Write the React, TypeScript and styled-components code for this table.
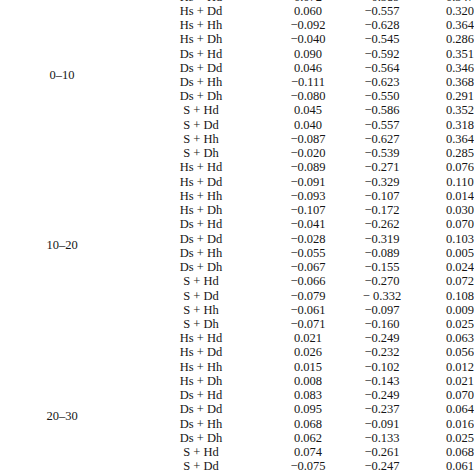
import React from 'react'
import styled, { createGlobalStyle } from 'styled-components'

/*---> Data <---*/
type Row = [string, string, string, string]

const groups: { label: string; rows: Row[] }[] = [
  {
    label: '0–10',
    rows: [
      ['Hs + Hd', '0.072', '−0.589', '0.347'],
      ['Hs + Dd', '0.060', '−0.557', '0.320'],
      ['Hs + Hh', '−0.092', '−0.628', '0.364'],
      ['Hs + Dh', '−0.040', '−0.545', '0.286'],
      ['Ds + Hd', '0.090', '−0.592', '0.351'],
      ['Ds + Dd', '0.046', '−0.564', '0.346'],
      ['Ds + Hh', '−0.111', '−0.623', '0.368'],
      ['Ds + Dh', '−0.080', '−0.550', '0.291'],
      ['S + Hd', '0.045', '−0.586', '0.352'],
      ['S + Dd', '0.040', '−0.557', '0.318'],
      ['S + Hh', '−0.087', '−0.627', '0.364'],
      ['S + Dh', '−0.020', '−0.539', '0.285'],
    ],
  },
  {
    label: '10–20',
    rows: [
      ['Hs + Hd', '−0.089', '−0.271', '0.076'],
      ['Hs + Dd', '−0.091', '−0.329', '0.110'],
      ['Hs + Hh', '−0.093', '−0.107', '0.014'],
      ['Hs + Dh', '−0.107', '−0.172', '0.030'],
      ['Ds + Hd', '−0.041', '−0.262', '0.070'],
      ['Ds + Dd', '−0.028', '−0.319', '0.103'],
      ['Ds + Hh', '−0.055', '−0.089', '0.005'],
      ['Ds + Dh', '−0.067', '−0.155', '0.024'],
      ['S + Hd', '−0.066', '−0.270', '0.072'],
      ['S + Dd', '−0.079', '− 0.332', '0.108'],
      ['S + Hh', '−0.061', '−0.097', '0.009'],
      ['S + Dh', '−0.071', '−0.160', '0.025'],
    ],
  },
  {
    label: '20–30',
    rows: [
      ['Hs + Hd', '0.021', '−0.249', '0.063'],
      ['Hs + Dd', '0.026', '−0.232', '0.056'],
      ['Hs + Hh', '0.015', '−0.102', '0.012'],
      ['Hs + Dh', '0.008', '−0.143', '0.021'],
      ['Ds + Hd', '0.083', '−0.249', '0.070'],
      ['Ds + Dd', '0.095', '−0.237', '0.064'],
      ['Ds + Hh', '0.068', '−0.091', '0.016'],
      ['Ds + Dh', '0.062', '−0.133', '0.025'],
      ['S + Hd', '0.074', '−0.261', '0.068'],
      ['S + Dd', '−0.075', '−0.247', '0.061'],
      ['S + Hh', '0.061', '−0.098', '0.014'],
      ['S + Dh', '0.055', '−0.141', '0.022'],
    ],
  },
]

/*---> Component <---*/
export default function App() {
  return (
    <>
      <GlobalStyle />
      <Table>
        {groups.map((group) => (
          <Group key={group.label}>
            <GroupLabel>{group.label}</GroupLabel>
            <Rows>
              {group.rows.map((row, i) => (
                <DataRow key={i}>
                  {row.map((cell, j) => (
                    <Cell key={j}>{cell}</Cell>
                  ))}
                </DataRow>
              ))}
            </Rows>
          </Group>
        ))}
      </Table>
    </>
  )
}

/*---> Styles <---*/
const GlobalStyle = createGlobalStyle`
  html, body {
    margin: 0;
    padding: 0;
    background: #ffffff;
    height: 474px;
    overflow: hidden;
  }
`

const Table = styled.div`
  display: flex;
  flex-direction: column;
  margin-top: -10.4px;
  width: 494px;
  font-family: 'Liberation Serif', 'Times New Roman', serif;
  font-size: 12.5px;
  color: #161616;
`

const Group = styled.div`
  display: flex;
`

const GroupLabel = styled.div`
  width: 124px;
  display: flex;
  align-items: center;
  justify-content: center;
`

const Rows = styled.div`
  display: flex;
  flex-direction: column;
`

const DataRow = styled.div`
  display: grid;
  grid-template-columns: 154px 60px 88px 68px;
  height: 14.24px;
  line-height: 14.24px;
`

const Cell = styled.div`
  text-align: center;
  white-space: pre;
`
